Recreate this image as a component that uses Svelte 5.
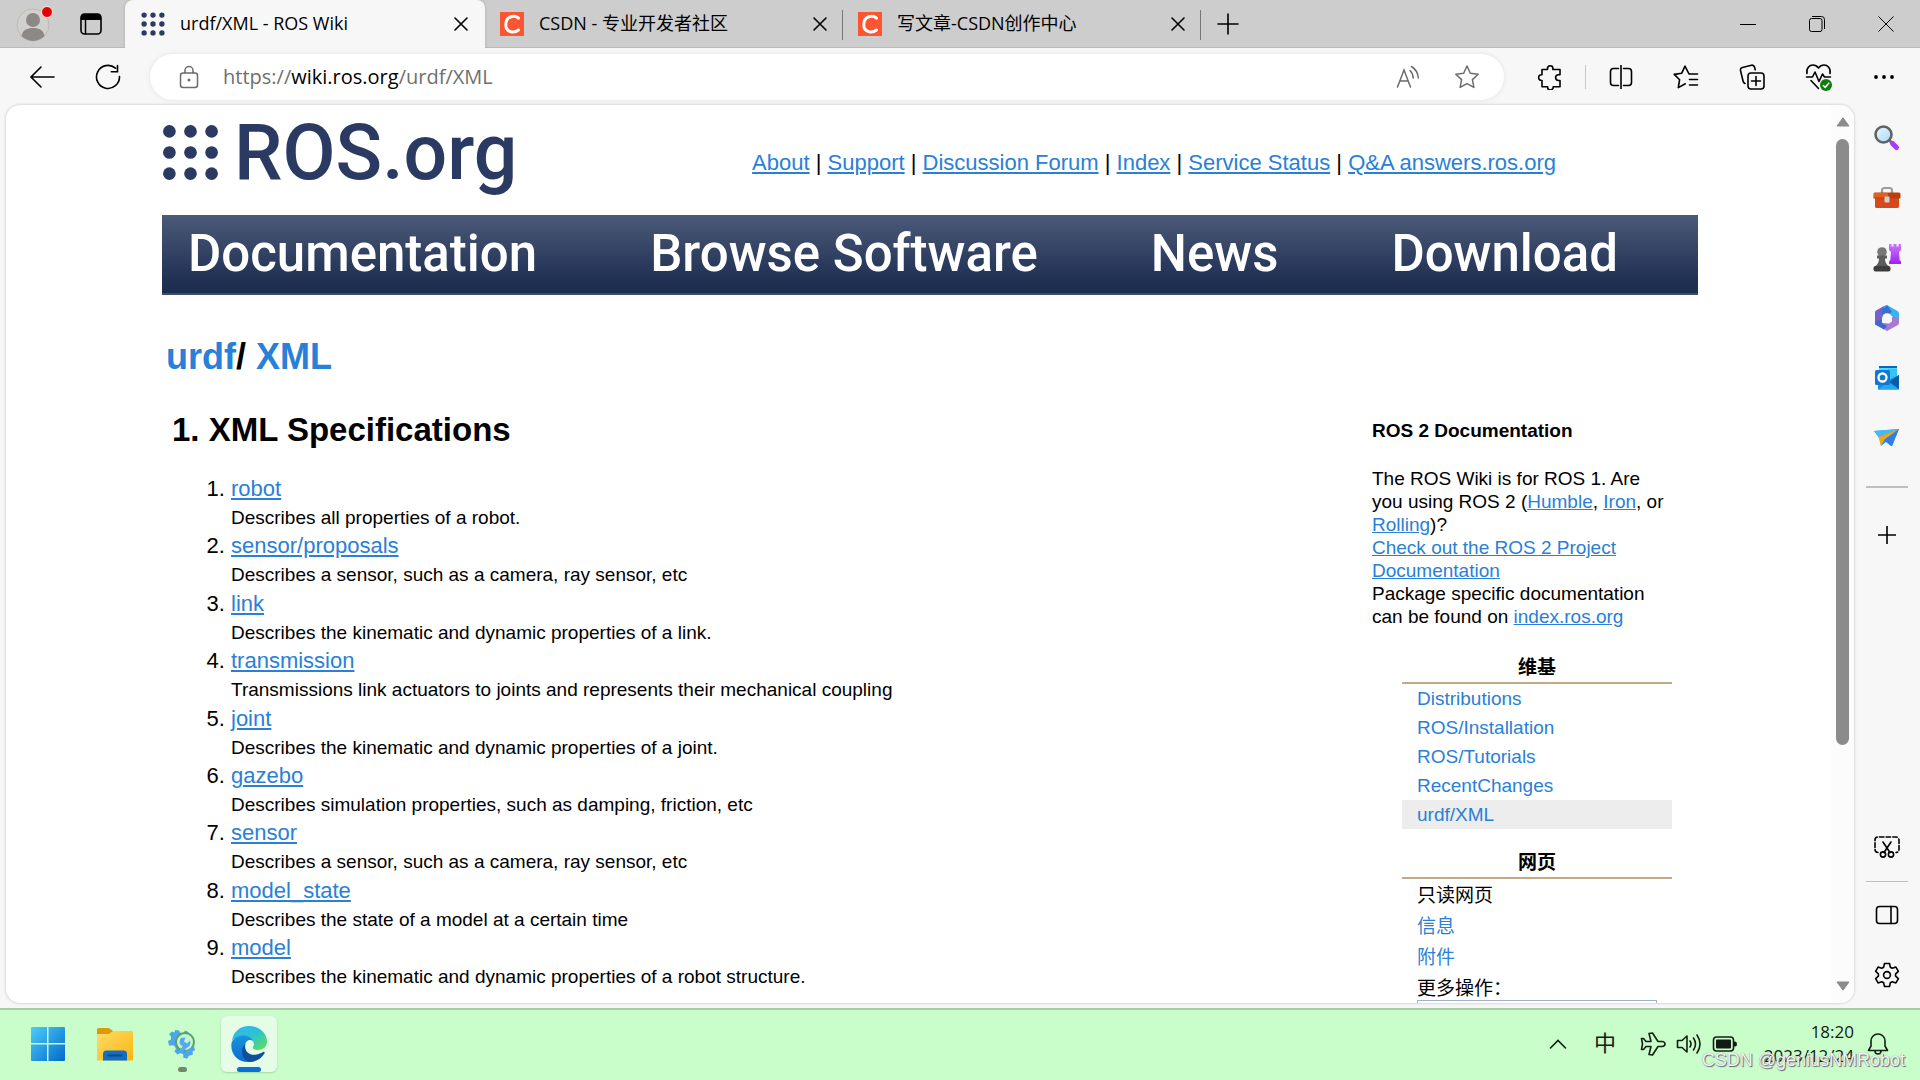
<script>
  const tabs = [
    { title: 'urdf/XML - ROS Wiki', icon: 'ros', active: true },
    { title: 'CSDN - 专业开发者社区', icon: 'csdn', active: false },
    { title: '写文章-CSDN创作中心', icon: 'csdn', active: false }
  ];
  const topLinks = ['About', 'Support', 'Discussion Forum', 'Index', 'Service Status', 'Q&A answers.ros.org'];
  const mainNav = ['Documentation', 'Browse Software', 'News', 'Download'];
  const specs = [
    ['robot', 'Describes all properties of a robot.'],
    ['sensor/proposals', 'Describes a sensor, such as a camera, ray sensor, etc'],
    ['link', 'Describes the kinematic and dynamic properties of a link.'],
    ['transmission', 'Transmissions link actuators to joints and represents their mechanical coupling'],
    ['joint', 'Describes the kinematic and dynamic properties of a joint.'],
    ['gazebo', 'Describes simulation properties, such as damping, friction, etc'],
    ['sensor', 'Describes a sensor, such as a camera, ray sensor, etc'],
    ['model_state', 'Describes the state of a model at a certain time'],
    ['model', 'Describes the kinematic and dynamic properties of a robot structure.']
  ];
  const wikiLinks = ['Distributions', 'ROS/Installation', 'ROS/Tutorials', 'RecentChanges', 'urdf/XML'];
  const dots = [5, 15, 25];
</script>

{#snippet rosDots()}
  <svg viewBox="1.500 1.500 27 27" aria-hidden="true">
    {#each dots as y}
      {#each dots as x}
        <circle cx={x} cy={y} r="3" fill="#2b3a63" />
      {/each}
    {/each}
  </svg>
{/snippet}

<div class="screen">
  <div class="tabstrip">
    <div class="tab-tools">
      <button class="ic" aria-label="Profile">
        <svg width="38" height="38" viewBox="0 0 38 38">
          <circle cx="18" cy="20" r="16" fill="#d2d0cd" stroke="#bdbbb8" />
          <circle cx="18" cy="15" r="7" fill="#8b8886" />
          <path d="M6.500 31c1-6 5.500-8 11.500-8s10.500 2 11.500 8a16 16 0 0 1-23 0z" fill="#8b8886" />
          <circle cx="32" cy="7" r="5.500" fill="#e60000" stroke="#ececec" />
        </svg>
      </button>
      <button class="ic" aria-label="Tab actions">
        <svg width="24" height="24" viewBox="0 0 24 24">
          <rect x="2" y="2" width="20" height="20" rx="3.500" fill="none" stroke="#000" stroke-width="1.600" />
          <path d="M2 8V5a3 3 0 0 1 3-3h14a3 3 0 0 1 3 3v3z" />
          <path d="M6.500 8v14" stroke="#000" stroke-width="1.500" />
        </svg>
      </button>
    </div>
    {#each tabs as tab}
      <div class="tab" class:active={tab.active}>
        <span class="favicon {tab.icon}">
          {#if tab.icon === 'ros'}
            {@render rosDots()}
          {:else}
            <svg viewBox="0 0 24 24" aria-hidden="true">
              <path d="M18.500 6.200C15 3 6 3.500 5.800 12.500 5.700 20.500 14 21.500 18.500 18" fill="none" stroke="#fff" stroke-width="3" stroke-linecap="round" />
            </svg>
          {/if}
        </span>
        <span class="tab-title">{tab.title}</span>
        <button class="ic" aria-label="Close tab">
          <svg width="14" height="14" viewBox="0 0 14 14"><path d="M1 1l12 12M13 1L1 13" class="line" /></svg>
        </button>
      </div>
    {/each}
    <button class="ic newtab" aria-label="New tab">
      <svg width="22" height="22" viewBox="0 0 22 22"><path d="M11 1v20M1 11h20" class="line" /></svg>
    </button>
    <div class="window-controls">
      <button class="ic" aria-label="Minimize"><svg width="16" height="16" viewBox="0 0 16 16"><path d="M0 8.500h16" class="thin" /></svg></button>
      <button class="ic" aria-label="Restore">
        <svg width="16" height="16" viewBox="0 0 16 16"><rect x=".5" y="2.500" width="12.500" height="13" rx="2" class="thin" /><path d="M3 .5h9.500a3 3 0 0 1 3 3V13" class="thin" /></svg>
      </button>
      <button class="ic" aria-label="Close window"><svg width="16" height="16" viewBox="0 0 16 16"><path d="M.5.5l15 15M15.500.5l-15 15" class="thin" /></svg></button>
    </div>
  </div>

  <div class="toolbar">
    <button class="ic back" aria-label="Back">
      <svg width="26" height="26" viewBox="0 0 26 26"><path d="M25 13H2M12 3L2 13l10 10" class="line" /></svg>
    </button>
    <button class="ic refresh" aria-label="Refresh">
      <svg width="26" height="26" viewBox="0 0 26 26"><path d="M24.500 12.500a11.500 11.500 0 1 1-4-8.300M22.500 1.500v6.200h-6.200" class="line" /></svg>
    </button>
    <div class="address">
      <svg width="20" height="24" viewBox="0 0 20 24" aria-hidden="true">
        <rect x="1.500" y="8" width="17" height="14.500" rx="2.500" class="grey" /><path d="M6 8V5.500a4 4 0 0 1 8 0V8" class="grey" /><circle cx="10" cy="15" r="1.500" fill="#6b6b6b" />
      </svg>
      <span class="url">https://<b>wiki.ros.org</b>/urdf/XML</span>
      <div class="address-actions">
        <button class="ic" aria-label="Read aloud">
          <svg width="24" height="24" viewBox="0 0 24 24"><path d="M1.500 22L8 5l6.500 17M3.800 16h8.400" class="grey" /><path d="M14 5.500c2 1.800 3 4 3.200 7.500M15.500 1.500c4 2.500 6.500 6.500 6.800 11.500" class="grey" /></svg>
        </button>
        <button class="ic" aria-label="Add to favorites">
          <svg width="26" height="26" viewBox="0 0 26 26"><path d="M13 2l3.300 7.200 7.900 1-5.800 5.400 1.500 7.800L13 19.600l-6.900 3.800 1.500-7.800-5.800-5.400 7.900-1z" class="grey" stroke-linejoin="round" /></svg>
        </button>
      </div>
    </div>
    <div class="tools">
      <button class="ic" aria-label="Extensions">
        <svg width="24" height="26" viewBox="0 0 24 26"><path d="M4 5.500h5.500V4.500a2.700 2.700 0 0 1 5.400 0v1H22v5.200h-1.500a2.900 2.900 0 0 0 0 5.800H22v6.200h-6.800v.5a2.800 2.800 0 0 1-5.600 0v-.5H4v-6.200H3.500a2.900 2.900 0 0 1 0-5.800H4z" class="line" stroke-linejoin="round" /></svg>
      </button>
      <span class="divider"></span>
      <button class="ic" aria-label="Split screen">
        <svg width="24" height="24" viewBox="0 0 24 24"><path d="M9.500 3.500h-5a3 3 0 0 0-3 3v11a3 3 0 0 0 3 3h5M14.500 3.500h5a3 3 0 0 1 3 3v11a3 3 0 0 1-3 3h-5M12 0v24" class="line" /></svg>
      </button>
      <button class="ic" aria-label="Favorites">
        <svg width="26" height="26" viewBox="0 0 26 26"><path d="M24.500 10H16l-4-7.800-3.400 7.100-7.400 1.100 5.400 5.300-1.300 7.900 7-3.800M16.500 15.500h8M16.500 21h8" class="line" stroke-linejoin="round" /></svg>
      </button>
      <button class="ic" aria-label="Collections">
        <svg width="26" height="26" viewBox="0 0 26 26"><rect x="9" y="9" width="16" height="16" rx="3" class="line" /><path d="M17 12.500v9M12.500 17h9M6 19.500c-1-.4-1.600-1-1.900-2.200L1.500 6.500C1.200 5 2 3.800 3.400 3.400l9-2.200c1.600-.3 2.700.5 3.200 2l.6 2.600" class="line" /></svg>
      </button>
      <button class="ic" aria-label="Browser essentials">
        <svg width="28" height="28" viewBox="0 0 28 28"><path d="M2 10.500C1 5 4.500 2 8 2c2.500 0 4 1 5.500 3C15 3 16.500 2 19 2c3.500 0 7 3 6 8.500M1.500 14h6l2.500-5 4 9.500L17.500 11l2 3h6M6 17.500l7.500 8" class="line" stroke-linejoin="round" /><circle cx="21" cy="22" r="6" fill="#107c10" /><path d="M18 22.200l2.200 2.100 4-4.500" fill="none" stroke="#fff" stroke-width="1.500" /></svg>
      </button>
      <button class="ic" aria-label="Settings and more">
        <svg width="22" height="22" viewBox="0 0 22 22"><circle cx="3" cy="11" r="1.900" /><circle cx="11" cy="11" r="1.900" /><circle cx="19" cy="11" r="1.900" /></svg>
      </button>
    </div>
  </div>

  <div class="middle">
    <div class="viewport">
      <div class="page">
        <header>
          <a class="logo" href="#home">{@render rosDots()}<span>ROS.org</span></a>
          <p class="top-links">
            {#each topLinks as link, i}{#if i}{' | '}{/if}<a href="#top">{link}</a>{/each}
          </p>
        </header>
        <nav>
          {#each mainNav as item}<a href="#nav">{item}</a>{/each}
        </nav>
        <div class="columns">
          <main>
            <h1><a href="#urdf">urdf</a>/ <a href="#xml">XML</a></h1>
            <h2>1. XML Specifications</h2>
            <ol>
              {#each specs as [name, text]}
                <li><a href="#spec">{name}</a><p>{text}</p></li>
              {/each}
            </ol>
          </main>
          <aside>
            <h3>ROS 2 Documentation</h3>
            <p>
              The ROS Wiki is for ROS 1. Are you using ROS 2 (<a href="#humble">Humble</a>, <a href="#iron">Iron</a>, or <a href="#rolling">Rolling</a>)?<br />
              <a href="#project">Check out the ROS 2 Project Documentation</a><br />
              Package specific documentation can be found on <a href="#index">index.ros.org</a>
            </p>
            <section>
              <h4>维基</h4>
              <ul>
                {#each wikiLinks as link}
                  <li class:current={link === 'urdf/XML'}><a href="#wiki">{link}</a></li>
                {/each}
              </ul>
            </section>
            <section>
              <h4>网页</h4>
              <ul class="cjk">
                <li>只读网页</li>
                <li><a href="#info">信息</a></li>
                <li><a href="#attach">附件</a></li>
                <li>
                  <label for="more">更多操作：</label>
                  <select id="more"><option></option></select>
                </li>
              </ul>
            </section>
          </aside>
        </div>
      </div>
      <div class="scrollbar" aria-hidden="true">
        <svg width="14" height="10" viewBox="0 0 14 10"><path d="M7 .8L13 9H1z" fill="#8b8b8b" stroke="#8b8b8b" stroke-linejoin="round" /></svg>
        <div class="track"><div class="thumb"></div></div>
        <svg width="14" height="10" viewBox="0 0 14 10"><path d="M7 9.200L1 1h12z" fill="#8b8b8b" stroke="#8b8b8b" stroke-linejoin="round" /></svg>
      </div>
    </div>

    <div class="sidebar">
      <div class="apps">
        <button class="ic" aria-label="Search">
          <svg width="28" height="28" viewBox="0 0 28 28">
            <defs><linearGradient id="glass" x2="1" y2="1"><stop stop-color="#eaf6ff" /><stop offset="1" stop-color="#a9dbfb" /></linearGradient></defs>
            <path d="M15 15l5 5" stroke="#777" stroke-width="3" /><path d="M19.500 19.500l4 4" stroke="#a93cf5" stroke-width="5" stroke-linecap="round" />
            <circle cx="10.500" cy="10.500" r="8" fill="url(#glass)" stroke="#636363" stroke-width="2.600" />
          </svg>
        </button>
        <button class="ic" aria-label="Shopping">
          <svg width="28" height="28" viewBox="0 0 28 28">
            <path d="M9 9V6.500A2.500 2.500 0 0 1 11.500 4h5A2.500 2.500 0 0 1 19 6.500V9" fill="none" stroke="#9b9b9b" stroke-width="2.200" />
            <rect x="2" y="13" width="24" height="11" rx="1.500" fill="#d9481c" /><path d="M2 8.500h24q1.500 0 1.500 1.500v4.500H.5V10Q.5 8.500 2 8.500z" fill="#bc3d10" /><path d="M1 9h14v4.500H.8z" fill="#f0711b" opacity=".7" />
            <rect x="11.500" y="12.500" width="5" height="6" rx="1" fill="#d0d0d0" />
          </svg>
        </button>
        <button class="ic" aria-label="Games">
          <svg width="28" height="28" viewBox="0 0 28 28">
            <defs><linearGradient id="rook" x2="0" y2="1"><stop stop-color="#c77bf8" /><stop offset="1" stop-color="#a020f8" /></linearGradient></defs>
            <path d="M16 0h2.500v2.500h2V0h3v2.500h2V0H28v6l-2 2 .7 8 1.300 1.500V20H16v-2.500l1.300-1.500L18 8l-2-2z" fill="url(#rook)" />
            <circle cx="9" cy="8" r="4.800" fill="#777" /><path d="M4 11.500h10v3h-2c0 4 1.500 6 4 8H2c2.500-2 4-4 4-8H4z" fill="#5c5c5c" /><rect x=".5" y="22" width="17" height="5.500" rx="2" fill="#3d3d3d" />
          </svg>
        </button>
        <button class="ic" aria-label="Microsoft 365">
          <svg width="28" height="28" viewBox="0 0 28 28">
            <path d="M11 2L3 6.500Q2 7 2 8.500v11L9 24V13l9-5z" fill="#7a5ed0" /><path d="M14 1l10.500 6Q26 8 26 9.500V17l-7-5-8-4V2z" fill="#35b5ec" /><path d="M14 1l-5 5v8l10-6z" fill="#3670cf" /><path d="M26 14v5q0 1.500-1.500 2.300L14 27l-5-3v-5l7 .5 3-2v-5z" fill="#a579d4" /><path d="M2 18l7-3v4l5 3-3 3.500-9-5z" fill="#3d69cf" /><circle cx="14" cy="14" r="4.800" fill="#f7f7f7" />
          </svg>
        </button>
        <button class="ic" aria-label="Outlook">
          <svg width="28" height="28" viewBox="0 0 28 28">
            <path d="M6 2h18v14H6z" fill="#50d9ff" /><path d="M6 2h18v2H6z" fill="#1066b5" /><path d="M15 5h9v9h-9z" fill="#35c4f4" /><path d="M5 14l12 1 9-4v14.500H5z" fill="#1490df" /><path d="M26 11v14L16 18z" fill="#0a5ca8" /><path d="M5 25.500L16 18l10 7.500z" fill="#28a8ea" />
            <rect x="2" y="6" width="15" height="15" rx="1.500" fill="#0f78d4" /><circle cx="9.500" cy="13.500" r="4" fill="none" stroke="#fff" stroke-width="2.300" />
          </svg>
        </button>
        <button class="ic" aria-label="Drop">
          <svg width="28" height="28" viewBox="0 0 28 28">
            <path d="M1 7l25-2-8 17-5-4-5 4-1-7z" fill="#2994ec" /><path d="M1 7l25-2L6 13z" fill="#41bdf3" /><path d="M26 5L5.500 13 8 22l3-6z" fill="#f1a714" /><path d="M26 5L11 16l8 6.500z" fill="#2f7ee8" />
          </svg>
        </button>
      </div>
      <hr />
      <button class="ic add" aria-label="Customize sidebar"><svg width="18" height="18" viewBox="0 0 18 18"><path d="M9 0v18M0 9h18" class="line" /></svg></button>
      <div class="lower">
        <button class="ic" aria-label="Screenshot">
          <svg width="26" height="24" viewBox="0 0 26 24"><path d="M4 17.500a3 3 0 0 1-3-3V5a3 3 0 0 1 3-3h18a3 3 0 0 1 3 3v9.500a3 3 0 0 1-3 3" class="line" stroke-dasharray="4.500 2.200" /><path d="M9 7l7 10.500M17 7l-7 10.500" class="line" /><circle cx="9" cy="19.500" r="2.600" class="line" /><circle cx="17" cy="19.500" r="2.600" class="line" /></svg>
        </button>
        <hr />
        <button class="ic" aria-label="Toggle sidebar"><svg width="24" height="20" viewBox="0 0 24 20"><rect x="1.500" y="1.500" width="21" height="17" rx="3" class="line" /><path d="M16 1.500v17" class="line" /></svg></button>
        <button class="ic" aria-label="Settings">
          <svg width="26" height="26" viewBox="0 0 26 26"><circle cx="13" cy="13" r="3.400" class="line" /><path d="M10.500 1.500h5l.8 3.700 2 1.100 3.600-1.200 2.500 4.300-2.800 2.500v2.200l2.800 2.500-2.500 4.300-3.600-1.200-2 1.100-.8 3.700h-5l-.8-3.700-2-1.100-3.600 1.200-2.500-4.300 2.800-2.500v-2.200L1.600 9.400l2.500-4.300 3.600 1.200 2-1.100z" class="line" stroke-linejoin="round" /></svg>
        </button>
      </div>
    </div>
  </div>

  <div class="taskbar">
    <button class="task" aria-label="Start">
      <svg width="36" height="36" viewBox="0 0 36 36">
        <defs><linearGradient id="win" gradientUnits="userSpaceOnUse" x1="0" y1="0" x2="36" y2="36"><stop stop-color="#4fd0fb" /><stop offset="1" stop-color="#0067c8" /></linearGradient></defs>
        <path d="M1 2q0-1 1-1h15v16H1zM18.500 1H34q1 0 1 1v15H18.500zM1 18.500h16V35H2q-1 0-1-1zM18.500 18.500H35V34q0 1-1 1H18.500z" fill="url(#win)" />
      </svg>
    </button>
    <button class="task" aria-label="File Explorer">
      <svg width="36" height="36" viewBox="0 0 36 36">
        <defs><linearGradient id="fold" x2="1" y2="1"><stop stop-color="#ffdc6b" /><stop offset="1" stop-color="#fbb50c" /></linearGradient></defs>
        <path d="M0 3.500Q0 2 1.500 2H11q1.500 0 3 1.500l2 1.500v8H0z" fill="#dc9a0b" /><path d="M0 8h11q1.500 0 3-1.500L16 5h18.500Q36 5 36 6.500v28H0z" fill="url(#fold)" /><path d="M6 34.500V28q0-3.500 3.500-3.500h17Q30 24.500 30 28v6.500z" fill="#0f6fc4" /><path d="M11.500 29.500h13" stroke="#0a4a8c" stroke-width="2" stroke-linecap="round" />
      </svg>
    </button>
    <button class="task running" aria-label="Settings tool">
      <svg width="30" height="30" viewBox="0 0 30 30">
        <path d="M8 1l4 .5 1.500 2.500h3L18 1.500l3.500 1.500v20l3 0 .5 3-3.500.5-1.500 3-3.500-1v-3l-3-1.500-3 1.500-3-3 1.500-3L7 16.500H2L1 12l3-1.500V7.500L2 5l3-2.500 2.500 1z" fill="#4da5ea" />
        <circle cx="18" cy="13" r="9" fill="#c5f6d0" stroke="#56a06a" stroke-width="2" />
        <path d="M27 17l1 4-2.500 1.500.5 3-4 1-2 3-3.500-1v-5z" fill="#4da5ea" />
        <path d="M14 9c-3 4-1 8 2 8l-4 5 3 2 5-5.500c3-1 4-4 3-7l-3 3-3-2 1.500-4z" fill="#55a8ee" />
      </svg>
    </button>
    <button class="task current-app" aria-label="Microsoft Edge">
      <svg width="36" height="36" viewBox="0 0 36 36">
        <defs>
          <linearGradient id="e1" x1="0" x2="1" y2="1"><stop stop-color="#31b5f0" /><stop offset=".5" stop-color="#2bc3d2" /><stop offset="1" stop-color="#66e04b" /></linearGradient>
          <linearGradient id="e2" x2="0" y2="1"><stop stop-color="#1a93dc" /><stop offset="1" stop-color="#0a6cd0" /></linearGradient>
        </defs>
        <path d="M1 15C2 6 9 0 18 0c11 0 18 8 18 15.500 0 5-4 8.500-9 8.500-4 0-6-1.500-5-3 2-3 .5-8-5-9.500C10 9.500 3 12 1 15z" fill="url(#e1)" />
        <path d="M.5 17C2 12 8 9 13 9.500c4 0 8 2.500 9 6-3-3-8-1-8 5 0 7 6 12 12 12-3 2-6 3.500-9 3.500C6 36-1 27 .5 17z" fill="url(#e2)" />
        <path d="M14.500 18c-2 7 4 12 11 10.500 3-.6 5-1.700 6.500-2.500 1.500-.5 2 .5 1.500 1.500C30 33 24.500 36 19 36c-8-2-11-13-4.500-18z" fill="#124f9b" />
      </svg>
    </button>
    <div class="tray">
      <button class="ic" aria-label="Show hidden icons"><svg width="18" height="18" viewBox="0 0 18 18"><path d="M1.500 13L9 5.500l7.500 7.500" class="tray-line" /></svg></button>
      <button class="ime" aria-label="Input method">中</button>
      <div class="status">
        <svg width="26" height="26" viewBox="0 0 26 26" aria-label="Airplane mode"><path d="M9 2.500L12.500 2l5.500 8.500h4.500q2.500.5 2.500 2.500t-2.500 2.500H18L12.500 24 9 23.500l2-8H6l-2.500 3h-2L2.500 13 1.500 7.500h2l2.500 3h5z" class="tray-line" stroke-linejoin="round" /></svg>
        <svg width="26" height="22" viewBox="0 0 26 22" aria-label="Volume"><path d="M1.500 7.500H6L11 3v16l-5-4.500H1.500zM14 8q2 3 0 6M17.500 5q4 6 0 12M21 2q6 9 0 18" class="tray-line" stroke-linejoin="round" /></svg>
        <svg width="26" height="18" viewBox="0 0 26 18" aria-label="Battery"><rect x="1.500" y="2" width="20" height="14" rx="3" class="tray-line" /><rect x="4" y="4.500" width="15" height="9" rx="1" fill="#111b11" /><path d="M22 6.500h1q2 0 2 2.500t-2 2.500h-1z" fill="#111b11" /></svg>
      </div>
      <div class="clock"><span>18:20</span><span>2023/12/24</span></div>
      <button class="ic" aria-label="Notifications"><svg width="22" height="24" viewBox="0 0 22 24"><path d="M1.500 18.500L4 14V9a7 7 0 0 1 14 0v5l2.500 4.500zM8 19a3 3 0 0 0 6 0" class="tray-line" stroke-linejoin="round" /></svg></button>
    </div>
    <span class="watermark">CSDN @geniusNMRobot</span>
  </div>
</div>

<style>
  :global(body) { margin: 0; overflow: hidden; }
  * { box-sizing: border-box; }
  .screen {
    display: flex; flex-direction: column; height: 100vh; background: #f7f7f7; color: #000;
    font-family: "Open Sans", "Noto Sans CJK SC", sans-serif; font-size: 17px;
  }
  button { border: 0; padding: 0; background: none; font: inherit; color: inherit; }
  svg { display: block; flex: none; }
  a { color: #2980d6; }
  .ic { display: grid; place-items: center; flex: none; }
  .line { fill: none; stroke: #000; stroke-width: 1.6; stroke-linecap: round; }
  .thin { fill: none; stroke: #000; stroke-width: 1; }
  .grey { fill: none; stroke: #6b6b6b; stroke-width: 1.5; stroke-linecap: round; }
  .tray-line { fill: none; stroke: #152015; stroke-width: 1.6; stroke-linecap: round; }

  .tabstrip { display: flex; height: 48px; flex: none; background: #cdcdcd; border-bottom: 1px solid #bababa; }
  .tab-tools { display: flex; align-items: center; gap: 26px; width: 125px; padding-left: 15px; }
  .tab { display: flex; align-items: center; width: 358px; padding: 0 16px 0 15px; position: relative; }
  .tab.active { width: 360px; height: 48px; padding: 0 17px 0 16px; background: #f7f7f7; border-radius: 8px 8px 0 0; box-shadow: 0 0 3px #aaa; clip-path: inset(0 -4px 0 -4px); }
  .tab:not(.active)::after { content: ""; position: absolute; right: 0; top: 10px; width: 1px; height: 30px; background: #777; }
  .favicon { width: 24px; height: 24px; flex: none; }
  .favicon svg { width: 100%; }
  .favicon.csdn { background: #fc5531; }
  .tab-title { flex: 1; padding: 0 0 2px 15px; font-size: 18px; line-height: 24px; white-space: nowrap; }
  .newtab { width: 54px; }
  .window-controls { display: flex; margin-left: auto; }
  .window-controls button { width: 69px; }

  .toolbar { display: flex; align-items: center; height: 57px; flex: none; }
  .back { width: 84px; }
  .refresh { width: 48px; margin-right: 18px; }
  .address { display: flex; align-items: center; flex: 1; height: 46px; padding: 0 24px 0 29px; gap: 24px; border-radius: 23px; background: #fff; box-shadow: 0 0 5px #e2e2e2; }
  .address-actions { display: flex; align-items: center; gap: 34px; }
  .url { flex: 1; font-size: 20px; color: #6f6f6f; }
  .url b { font-weight: 400; color: #000; }
  .tools { display: flex; align-items: center; gap: 40px; padding: 0 25px 0 34px; }
  .divider { width: 1px; height: 24px; margin: 0 -17px; background: #c8c8c8; }

  .middle { display: flex; flex: 1; min-height: 0; padding: 0 0 5px 6px; }
  .viewport {
    position: relative; flex: 1; overflow: hidden; background: #fff; border-radius: 14px;
    box-shadow: 0 0 3px #bbb; font-family: "Liberation Sans", "Noto Sans CJK SC", sans-serif;
  }
  .page { max-width: 1536px; margin: 0 auto; }
  header { display: flex; justify-content: space-between; align-items: flex-start; height: 110px; padding-right: 142px; }
  .logo { display: flex; align-items: flex-start; gap: 15px; color: #2b3a63; text-decoration: none; font: 500 77px/90px Roboto, sans-serif; padding-top: 3px; }
  .logo svg { width: 57px; height: 57px; margin-top: 16px; }
  .top-links { margin: 0; padding-top: 44px; font-size: 22px; line-height: 28px; white-space: pre; }
  nav { display: flex; align-items: center; gap: 113px; height: 80px; padding: 0 26px; background: linear-gradient(#4a5a7a, #42506f 20%, #1f3054 85%, #1c2e50); border-bottom: 2px solid #3c4c6c; }
  nav a { color: #fff; text-decoration: none; font: 500 51px/76px Roboto, sans-serif; white-space: nowrap; }
  .columns { display: flex; justify-content: space-between; }
  h1, h2, h3, h4, p, ul, ol { margin: 0; padding: 0; }
  h1 { padding: 40px 0 0 4px; font-size: 36px; line-height: 44px; }
  h1 a { text-decoration: none; }
  h2 { padding: 31px 0 0 10px; font-size: 33px; line-height: 40px; }
  ol { display: grid; align-content: space-between; min-height: 516px; margin-top: 24px; padding-left: 69px; font-size: 22px; line-height: 30px; }
  ol p { font-size: 19px; line-height: 27px; }
  aside { width: 326px; padding: 124px 26px 0 0; font-size: 19px; line-height: 23px; }
  h3 { font-size: 19px; line-height: 23px; padding-bottom: 25px; }
  section { margin: 22px 0 0 30px; }
  section + section { margin-top: 16px; }
  h4 { padding-top: 3px; text-align: center; font-size: 19px; line-height: 29px; border-bottom: 2px solid #c0ab86; }
  ul { list-style: none; line-height: 29px; }
  ul li { padding-left: 15px; }
  ul a { text-decoration: none; }
  .current { background: #ededed; }
  .cjk { padding-top: 1px; line-height: 31px; }
  label, select { display: block; }
  label { padding-top: 4px; line-height: 23px; }
  select { width: 240px; height: 28px; border: 1px solid #9fb2c8; background: #fff; }

  .scrollbar { position: absolute; inset: 0 0 0 auto; display: flex; flex-direction: column; align-items: center; width: 23px; padding: 12px 0; background: #fcfcfc; }
  .track { flex: 1; width: 13px; padding: 12px 0; }
  .thumb { height: 73%; border-radius: 7px; background: #8b8b8b; }

  .sidebar { display: flex; flex-direction: column; align-items: center; width: 66px; padding-top: 19px; }
  .apps { display: grid; gap: 32px; }
  hr { width: 42px; height: 2px; margin: 0; border: 0; background: #bfbfbf; }
  .sidebar > hr { margin-top: 34px; }
  .add { margin-top: 38px; }
  .lower { display: flex; flex-direction: column; align-items: center; margin-top: auto; padding-bottom: 15px; }
  .lower hr { height: 1px; margin: 22px 0 23px; }
  .lower button + button { margin-top: 37px; }

  .taskbar { position: relative; display: flex; align-items: center; height: 72px; flex: none; padding: 0 31px 2px 20px; background: #c9fdca; border-top: 2px solid #a9c9aa; }
  .task { position: relative; display: grid; place-items: center; width: 56px; height: 56px; margin-right: 11px; border-radius: 6px; }
  .running::after, .current-app::after { content: ""; position: absolute; bottom: 0; width: 9px; height: 5px; border-radius: 3px; background: #71886f; }
  .current-app { background: #e5fde6; box-shadow: 0 1px 2px #a9d8aa; }
  .current-app::after { width: 24px; background: #0a70d3; }
  .tray { display: flex; align-items: center; margin-left: auto; color: #152015; }
  .ime { margin: 0 24px 0 27px; padding-bottom: 4px; font-size: 22px; line-height: 28px; }
  .status { display: flex; align-items: center; gap: 10px; }
  .clock { display: flex; flex-direction: column; width: 116px; text-align: right; line-height: 24px; margin-right: 13px; }
  .watermark { position: absolute; right: 15px; bottom: 8px; color: #f2f2f2; font: 18px/24px "Liberation Sans", sans-serif; text-shadow: 1px 1px 1px #667, 0 0 1px #888; }
</style>
